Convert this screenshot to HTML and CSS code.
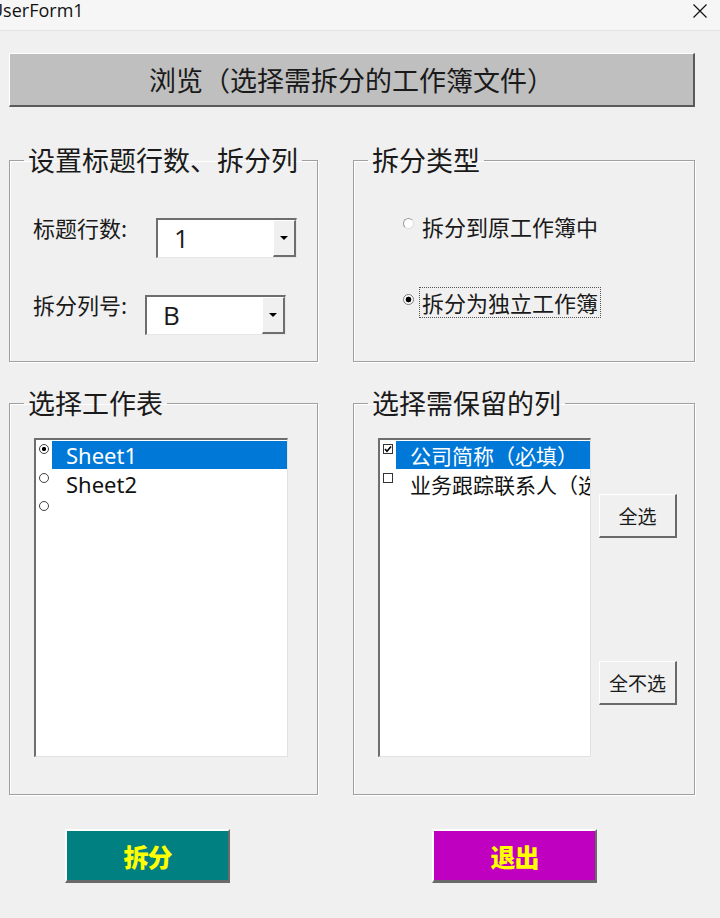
FILE: index.html
```html
<!DOCTYPE html>
<html lang="zh-CN">
<head>
    <meta charset="UTF-8">
    <meta name="viewport" content="width=device-width, initial-scale=1.0">
    <title>UserForm1</title>
    <link rel="stylesheet" href="styles.css">
</head>
<body>
    <div class="titlebar">
        <span class="title">UserForm1</span>
        <svg class="close" width="16" height="16" viewBox="0 0 16 16">
            <path d="M1.5 1.5 L14.5 14.5 M14.5 1.5 L1.5 14.5" stroke="#111" stroke-width="1.2" fill="none"/>
        </svg>
    </div>

    <div class="form">
        <button type="button" class="browse">浏览（选择需拆分的工作簿文件）</button>

        <div class="frames">
            <fieldset class="frame">
                <legend>设置标题行数、拆分列</legend>
                <div class="frame-body setup">
                    <div class="field">
                        <label>标题行数:</label>
                        <div class="combo combo-rows">
                            <span class="combo-value">1</span>
                            <span class="combo-btn"><span class="arrow"></span></span>
                        </div>
                    </div>
                    <div class="field field-col">
                        <label>拆分列号:</label>
                        <div class="combo combo-col">
                            <span class="combo-value">B</span>
                            <span class="combo-btn"><span class="arrow"></span></span>
                        </div>
                    </div>
                </div>
            </fieldset>

            <fieldset class="frame">
                <legend>拆分类型</legend>
                <div class="frame-body types">
                    <div class="option">
                        <span class="radio"></span>
                        <span class="option-text">拆分到原工作簿中</span>
                    </div>
                    <div class="option">
                        <span class="radio checked"></span>
                        <span class="option-text focused">拆分为独立工作簿</span>
                    </div>
                </div>
            </fieldset>

            <fieldset class="frame">
                <legend>选择工作表</legend>
                <div class="frame-body">
                    <div class="listbox sheets">
                        <div class="item">
                            <span class="mark radio small checked"></span>
                            <span class="item-text selected">Sheet1</span>
                        </div>
                        <div class="item">
                            <span class="mark radio small"></span>
                            <span class="item-text">Sheet2</span>
                        </div>
                        <div class="item">
                            <span class="mark radio small"></span>
                            <span class="item-text"></span>
                        </div>
                    </div>
                </div>
            </fieldset>

            <fieldset class="frame">
                <legend>选择需保留的列</legend>
                <div class="frame-body columns">
                    <div class="listbox cols">
                        <div class="item">
                            <span class="mark check checked">
                                <svg width="8" height="8" viewBox="0 0 8 8"><path d="M1 4 L3 6.2 L7 1.5" stroke="#000" stroke-width="1.6" fill="none"/></svg>
                            </span>
                            <span class="item-text selected">公司简称（必填）</span>
                        </div>
                        <div class="item">
                            <span class="mark check"></span>
                            <span class="item-text">业务跟踪联系人（选填）</span>
                        </div>
                    </div>
                    <div class="side-buttons">
                        <button type="button" class="small-btn">全选</button>
                        <button type="button" class="small-btn">全不选</button>
                    </div>
                </div>
            </fieldset>
        </div>

        <div class="actions">
            <button type="button" class="action split">拆分</button>
            <button type="button" class="action quit">退出</button>
        </div>
    </div>
</body>
</html>
```

FILE: styles.css
```css
body {
    margin: 0;
    width: 720px;
    height: 918px;
    overflow: hidden;
    background-color: #f0f0f0;
    font-family: "Noto Sans CJK SC", "Noto Sans", sans-serif;
    color: #1a1a1a;
}

.titlebar {
    height: 30px;
    display: flex;
    justify-content: space-between;
    align-items: flex-start;
    background-color: #f6f6f6;
    border-bottom: 1px solid #e4e4e4;
}

.title {
    margin-left: -10px;
    font-family: "Open Sans", "Noto Sans", sans-serif;
    font-size: 18px;
    line-height: 20px;
    color: #111111;
}

.close {
    margin: 3px 12px 0 0;
}

.form {
    padding-left: 9px;
}

button {
    font-family: "Noto Sans CJK SC", sans-serif;
    cursor: pointer;
    padding: 0;
}

.browse {
    display: block;
    margin-top: 22px;
    width: 686px;
    height: 54px;
    background-color: #bfbfbf;
    border-style: solid;
    border-width: 1px 2px 2px 1px;
    border-color: #ffffff #5a5a5a #5a5a5a #ffffff;
    font-size: 27px;
    line-height: 30px;
    color: #1a1a1a;
}

.frames {
    margin-top: 36px;
    display: grid;
    grid-template-columns: 309px 342px;
    column-gap: 35px;
    row-gap: 24px;
}

.frame {
    margin: 0;
    padding: 0;
    min-width: 0;
    border: 1px solid #a0a0a0;
    box-shadow: 1px 1px 0 #ffffff, inset 1px 1px 0 #ffffff;
}

.frame legend {
    margin-left: 14px;
    padding: 0 4px;
    font-size: 27px;
    line-height: 34px;
    color: #1a1a1a;
}

.frame-body {
    box-sizing: border-box;
    height: 374px;
    padding: 18px 0 0 24px;
}

/* title rows / split column */
.frame-body.setup,
.frame-body.types {
    height: 184px;
}

.setup {
    padding: 41px 0 0 23px;
}

.field {
    display: flex;
    align-items: center;
}

.field label {
    flex: none;
    width: 101px;
    font-size: 22px;
    line-height: 28px;
    margin-top: -22px;
}

.field-col {
    margin-top: 37px;
}

.combo {
    box-sizing: border-box;
    width: 141px;
    height: 40px;
    display: flex;
    background-color: #ffffff;
    border-style: solid;
    border-width: 2px 1px 1px 2px;
    border-color: #6e6e6e #e6e6e6 #e6e6e6 #6e6e6e;
}

.combo-rows {
    margin-left: 22px;
}

.combo-col {
    margin-left: 11px;
}

.combo-value {
    flex: 1;
    padding-left: 16px;
    font-family: "Open Sans", "Noto Sans", sans-serif;
    font-size: 26px;
    line-height: 40px;
    margin-top: -2px;
}

.combo-btn {
    box-sizing: border-box;
    width: 23px;
    display: flex;
    justify-content: center;
    align-items: center;
    background-color: #f0f0f0;
    border-style: solid;
    border-width: 1px 2px 2px 1px;
    border-color: #ffffff #6e6e6e #6e6e6e #ffffff;
}

.arrow {
    width: 0;
    height: 0;
    border-left: 4px solid transparent;
    border-right: 4px solid transparent;
    border-top: 4px solid #000000;
}

/* split type */
.types {
    padding: 33px 0 0 49px;
}

.option {
    display: flex;
    align-items: center;
    height: 32px;
}

.option + .option {
    margin-top: 44px;
}

.option-text {
    margin-left: 5px;
    padding: 0 2px;
    font-size: 22px;
    line-height: 29px;
    border: 1px dotted transparent;
}

.option-text.focused {
    border-color: #555555;
}

.radio {
    box-sizing: border-box;
    width: 11px;
    height: 11px;
    border-radius: 50%;
    background-color: #ffffff;
    border: 1px solid #9a9a9a;
    border-right-color: #e0e0e0;
    border-bottom-color: #e0e0e0;
    margin-top: -6px;
}

.radio.checked {
    border-color: #7a7a7a;
    background: radial-gradient(circle, #000000 0 2.6px, #ffffff 3.2px);
}

/* list boxes */
.listbox {
    box-sizing: border-box;
    width: 254px;
    height: 319px;
    background-color: #ffffff;
    border-style: solid;
    border-width: 2px 1px 1px 2px;
    border-color: #6e6e6e #e2e2e2 #e2e2e2 #6e6e6e;
    padding: 1px 0 0 3px;
    overflow: hidden;
}

.item {
    display: flex;
    align-items: flex-start;
    height: 28.5px;
}

.mark {
    flex: none;
    margin-top: 3px;
}

.radio.small {
    width: 10px;
    height: 10px;
    border: 1px solid #404040;
}

.radio.small.checked {
    background: radial-gradient(circle, #000000 0 1.8px, #ffffff 2.4px);
}

.item-text {
    flex: 1;
    height: 28px;
    margin-left: 3px;
    padding-left: 14px;
    white-space: nowrap;
    overflow: hidden;
    font-family: "Noto Sans", "Noto Sans CJK SC", sans-serif;
    font-size: 22px;
    line-height: 28px;
    color: #111111;
}

.item-text.selected {
    background-color: #0078d7;
    color: #ffffff;
}

.columns {
    display: flex;
    align-items: flex-start;
}

.listbox.cols {
    width: 213px;
    padding-left: 3px;
}

.cols .item-text {
    padding-left: 14px;
    font-family: "Noto Sans CJK SC", sans-serif;
    font-size: 21px;
}

.check {
    box-sizing: border-box;
    width: 10px;
    height: 10px;
    border: 1px solid #333333;
    background-color: #ffffff;
    display: flex;
    align-items: center;
    justify-content: center;
}

.side-buttons {
    display: flex;
    flex-direction: column;
    gap: 123px;
    margin: 56px 0 0 8px;
}

.small-btn {
    box-sizing: border-box;
    width: 78px;
    height: 44px;
    background-color: #f0f0f0;
    border-style: solid;
    border-width: 1px 2px 2px 1px;
    border-color: #ffffff #6a6a6a #6a6a6a #ffffff;
    font-size: 19px;
    color: #1a1a1a;
}

/* bottom buttons */
.actions {
    display: flex;
    gap: 202px;
    margin: 34px 0 0 56px;
}

.action {
    box-sizing: border-box;
    width: 165px;
    height: 54px;
    border-style: solid;
    border-width: 2px 2px 3px 2px;
    border-color: #ffffff #6a6a6a #6a6a6a #ffffff;
    color: #ffff00;
    font-size: 25px;
    font-weight: 900;
    letter-spacing: -1px;
}

.split {
    background-color: #008080;
}

.quit {
    background-color: #c000c0;
}
```
